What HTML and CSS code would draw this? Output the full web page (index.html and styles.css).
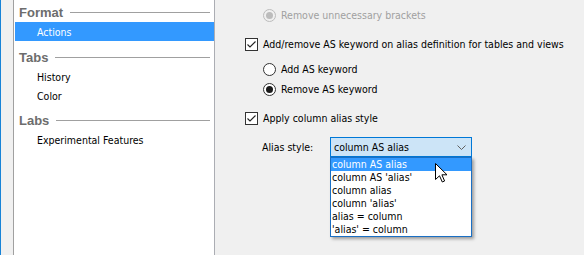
FILE: index.html
```html
<!DOCTYPE html>
<html>
<head>
<meta charset="utf-8">
<link rel="stylesheet" href="styles.css">
</head>
<body>
<div class="window">
  <aside class="nav">
    <div class="nav-head"><span>Format</span></div>
    <div class="nav-item selected">Actions</div>
    <div class="nav-head gap"><span>Tabs</span></div>
    <div class="nav-item">History</div>
    <div class="nav-item">Color</div>
    <div class="nav-head gap2"><span>Labs</span></div>
    <div class="nav-item">Experimental Features</div>
  </aside>
  <main class="content">
    <div class="row r1 sub disabled">
      <span class="radio checked"></span><span>Remove unnecessary brackets</span>
    </div>
    <div class="row r2">
      <span class="check"><svg width="11" height="11" viewBox="0 0 11 11"><path d="M1.5 5.5 L4 8 L9.5 2.5" fill="none" stroke="#222" stroke-width="1.1"/></svg></span><span>Add/remove AS keyword on alias definition for tables and views</span>
    </div>
    <div class="row r3 sub">
      <span class="radio"></span><span>Add AS keyword</span>
    </div>
    <div class="row r4 sub">
      <span class="radio checked"></span><span>Remove AS keyword</span>
    </div>
    <div class="row r5">
      <span class="check"><svg width="11" height="11" viewBox="0 0 11 11"><path d="M1.5 5.5 L4 8 L9.5 2.5" fill="none" stroke="#222" stroke-width="1.1"/></svg></span><span>Apply column alias style</span>
    </div>
    <div class="row r6">
      <span class="label">Alias style:</span>
      <div class="combo">
        <span class="combo-value">column AS alias</span>
        <svg class="chev" width="9" height="5" viewBox="0 0 9 5"><path d="M0.5 0.5 L4.5 4.5 L8.5 0.5" fill="none" stroke="#606060" stroke-width="1"/></svg>
        <ul class="dropdown">
          <li class="hot">column AS alias</li>
          <li>column AS 'alias'</li>
          <li>column alias</li>
          <li>column 'alias'</li>
          <li>alias = column</li>
          <li>'alias' = column</li>
        </ul>
        <svg class="cursor" width="13" height="20" viewBox="0 0 13 20"><path d="M0.5 0.5 L0.5 16.5 L4.5 12.8 L7.3 19 L9.6 18 L6.9 11.8 L12 11.8 Z" fill="#fff" stroke="#000" stroke-width="1" stroke-linejoin="miter"/></svg>
      </div>
    </div>
  </main>
</div>
</body>
</html>
```

FILE: styles.css
```css
html, body {
  margin: 0;
  padding: 0;
  background: #f0f0f0;
  overflow: hidden;
}
.window {
  height: 255px;
  border-left: 1px solid #1883d7;
  display: flex;
  font-family: "DejaVu Sans Condensed", "DejaVu Sans", sans-serif;
  font-stretch: condensed;
  font-size: 10.5px;
  color: #000;
}
.nav {
  margin-left: 12px;
  width: 202px;
  box-sizing: border-box;
  background: #fff;
  border-left: 1px solid #a0a0a0;
  border-right: 1px solid #abadb3;
  padding-top: 2px;
  flex: none;
}
.nav-head {
  height: 20px;
  display: flex;
  align-items: center;
  padding: 0 4px 0 5px;
  font-family: "Liberation Sans", Arial, sans-serif;
  font-stretch: normal;
  font-weight: bold;
  font-size: 13px;
  color: #6d6d6d;
}
.nav-head::after {
  content: "";
  flex: 1;
  height: 1px;
  background: #a0a0a0;
  margin-left: 7px;
}
.nav-head.gap {
  margin-top: 6px;
}
.nav-head.gap2 {
  margin-top: 5px;
}
.nav-item {
  height: 19px;
  line-height: 20px;
  margin-left: 1px;
  padding-left: 22px;
}
.nav-item.selected {
  background: #3399ff;
  color: #fff;
}
.content {
  flex: 1;
  padding: 5px 0 0 30px;
}
.row {
  height: 20px;
  display: flex;
  align-items: center;
  gap: 5px;
  white-space: nowrap;
}
.row.sub {
  margin-left: 18px;
}
.r2, .r5, .r6 { margin-top: 9px; }
.r3 { margin-top: 5px; }
.disabled { color: #a0a0a0; }
.check {
  width: 13px;
  height: 13px;
  box-sizing: border-box;
  border: 1px solid #333;
  background: #fff;
  display: flex;
  align-items: center;
  justify-content: center;
  flex: none;
}
.radio {
  width: 13px;
  height: 13px;
  box-sizing: border-box;
  border: 1px solid #333;
  border-radius: 50%;
  background: #fff;
  display: flex;
  align-items: center;
  justify-content: center;
  flex: none;
}
.radio.checked::after {
  content: "";
  width: 7px;
  height: 7px;
  border-radius: 50%;
  background: #1a1a1a;
}
.disabled .radio {
  border-color: #bcbcbc;
  background: #f0f0f0;
}
.disabled .radio.checked::after {
  background: #bcbcbc;
}
.label {
  margin-left: 17px;
  width: 63px;
}
.combo {
  position: relative;
  width: 142px;
  height: 20px;
  box-sizing: border-box;
  border: 1px solid #0078d7;
  background: #cce4f7;
  display: flex;
  align-items: center;
  padding-left: 3px;
}
.combo-value { flex: 1; }
.chev { margin-right: 5px; }
.dropdown {
  position: absolute;
  left: -1px;
  top: 19px;
  width: 142px;
  box-sizing: border-box;
  margin: 0;
  padding: 0;
  list-style: none;
  background: #fff;
  border: 1px solid #1a6fc4;
  box-shadow: 2px 2px 3px rgba(0,0,0,0.35);
}
.dropdown li {
  height: 13px;
  line-height: 13px;
  padding-left: 1px;
}
.dropdown li.hot {
  background: #3399ff;
  color: #fff;
}
.cursor {
  position: absolute;
  left: 104px;
  top: 25px;
}
```
